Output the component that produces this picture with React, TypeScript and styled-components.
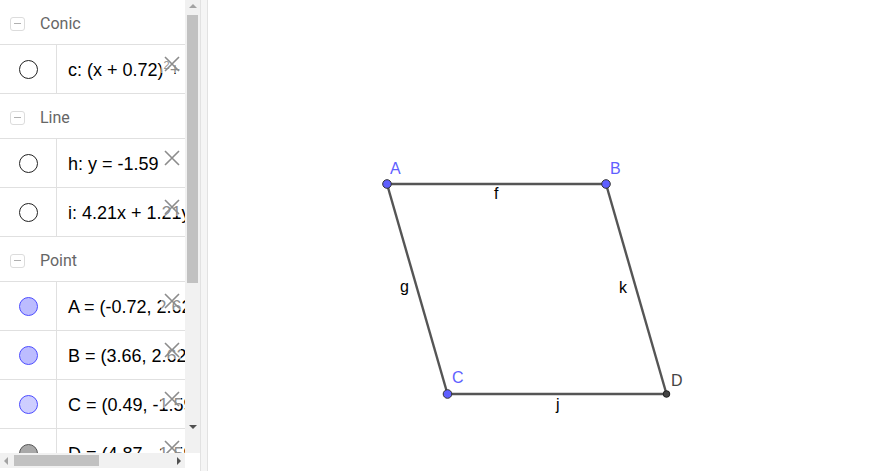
import * as React from 'react'
import styled, { createGlobalStyle, css } from 'styled-components'

const GlobalStyle = createGlobalStyle`
  html, body {
    margin: 0;
    padding: 0;
    background: #fff;
    overflow: hidden;
  }
  body {
    font-family: 'Liberation Sans', Arial, sans-serif;
  }
`

const StyledRoot = styled.div`
  display: flex;
  width: 871px;
  height: 471px;
  background: #fff;
`

const AlgebraPanel = styled.div`
  display: grid;
  grid-template-columns: 185px 15px;
  grid-template-rows: 453px 15px;
  width: 200px;
  height: 471px;
  flex-shrink: 0;
`

const ListArea = styled.div`
  overflow: hidden;
  background: #fff;
`

const GroupHeader = styled.div`
  display: flex;
  align-items: center;
  height: 45px;
  padding: 3px 0 0 10px;
  box-sizing: border-box;
  border-bottom: 1px solid #e0e0e0;
  color: #666;
  font-family: Roboto, 'Liberation Sans', sans-serif;
  font-size: 16px;
`

const CollapseBox = styled.span`
  position: relative;
  width: 15px;
  height: 14px;
  box-sizing: border-box;
  border: 1px solid #dcdcdc;
  border-radius: 3px;
  margin-right: 15px;
  &::after {
    content: '';
    position: absolute;
    left: 3px;
    right: 3px;
    top: 5px;
    height: 1.5px;
    background: #b0b0b0;
  }
`

const ItemRow = styled.div`
  display: flex;
  height: 49px;
  box-sizing: border-box;
  border-bottom: 1px solid #e0e0e0;
`

const MarkerCell = styled.div`
  display: flex;
  align-items: center;
  justify-content: center;
  width: 56px;
  flex-shrink: 0;
  border-right: 1px solid #e0e0e0;
`

type MarkerKind = 'empty' | 'free' | 'dotted' | 'grey'

const markerStyles = {
  empty: css`
    background: #fff;
    border: 1.3px solid #222;
  `,
  free: css`
    background: #bcbcff;
    border: 1.3px solid #4d4dff;
  `,
  dotted: css`
    background-color: #b8b8ff;
    background-image: radial-gradient(#e6e6ff 0.6px, transparent 0.8px);
    background-size: 2px 2px;
    border: 1.3px solid #4d4dff;
  `,
  grey: css`
    background: #a9a9a9;
    border: 1.3px solid #555;
  `
}

const Marker = styled.span<{ $kind: MarkerKind }>`
  display: block;
  width: 19px;
  height: 19px;
  box-sizing: border-box;
  border-radius: 50%;
  margin-left: 1px;
  ${({ $kind }) => markerStyles[$kind]}
`

const ItemText = styled.div`
  position: relative;
  flex: 1;
  display: flex;
  align-items: center;
  padding-left: 11px;
  padding-top: 2px;
  white-space: nowrap;
  font-size: 18px;
  color: #000;
  overflow: hidden;
  sup {
    font-size: 11px;
    margin-top: -10px;
  }
`

const DeleteButton = styled.span`
  position: absolute;
  top: 11px;
  left: 104px;
  width: 20px;
  height: 17px;
  background: rgba(255, 255, 255, 0.55);
  svg {
    display: block;
    margin-left: 3px;
  }
`

const VScroll = styled.div`
  display: flex;
  flex-direction: column;
  align-items: center;
  background: #f1f1f1;
  padding-top: 4px;
  box-sizing: border-box;
`

const HScroll = styled.div`
  display: flex;
  align-items: center;
  background: #f1f1f1;
  padding: 0 4px;
  box-sizing: border-box;
`

const Corner = styled.div`
  background: #fff;
`

const Arrow = styled.span<{ $dir: 'up' | 'down' | 'left' | 'right' }>`
  width: 0;
  height: 0;
  flex-shrink: 0;
  ${({ $dir }) => {
    switch ($dir) {
      case 'up': return css`border-left: 4px solid transparent; border-right: 4px solid transparent; border-bottom: 4px solid #a3a3a3;`
      case 'down': return css`border-left: 4px solid transparent; border-right: 4px solid transparent; border-top: 4px solid #505050;`
      case 'left': return css`border-top: 4px solid transparent; border-bottom: 4px solid transparent; border-right: 4px solid #a3a3a3;`
      default: return css`border-top: 4px solid transparent; border-bottom: 4px solid transparent; border-left: 4px solid #505050;`
    }
  }}
`

const VThumb = styled.div`
  width: 11px;
  height: 268px;
  margin-top: 7px;
  background: #c1c1c1;
`

const HThumb = styled.div`
  width: 85px;
  height: 11px;
  margin-left: 6px;
  background: #c1c1c1;
`

const Spacer = styled.div`
  flex: 1;
`

const DownSlot = styled.div`
  padding-bottom: 6px;
`

const Splitter = styled.div`
  width: 6px;
  flex-shrink: 0;
  background: #f5f5f5;
  border-left: 1px solid #e2e2e2;
  border-right: 1px solid #e2e2e2;
`

const Canvas = styled.div`
  flex: 1;
  background: #fff;
  svg {
    display: block;
  }
`

const CanvasLabel = styled.text<{ $color?: string }>`
  font-family: 'Liberation Sans', Arial, sans-serif;
  font-size: 16px;
  fill: ${({ $color }) => $color ?? '#000'};
`

interface Item {
  kind: MarkerKind
  text: React.ReactNode
}

interface Group {
  title: string
  items: Item[]
}

const groups: Group[] = [
  {
    title: 'Conic',
    items: [{ kind: 'empty', text: <>c: (x + 0.72)<sup>2</sup> + (y - 2.62)<sup>2</sup> = 23.3</> }]
  },
  {
    title: 'Line',
    items: [
      { kind: 'empty', text: 'h: y = -1.59' },
      { kind: 'empty', text: 'i: 4.21x + 1.21y = 0.1' }
    ]
  },
  {
    title: 'Point',
    items: [
      { kind: 'free', text: 'A = (-0.72, 2.62)' },
      { kind: 'free', text: 'B = (3.66, 2.62)' },
      { kind: 'dotted', text: 'C = (0.49, -1.59)' },
      { kind: 'grey', text: 'D = (4.87, -1.59)' }
    ]
  }
]

const CrossIcon = () => (
  <svg width="16" height="16" viewBox="0 0 16 16">
    <path d="M1 1 L15 15 M15 1 L1 15" stroke="#8c8c8c" strokeWidth="1.6" fill="none" />
  </svg>
)

const BLUE = '#5f5fff'

const points = {
  A: { x: 387, y: 184 },
  B: { x: 606, y: 184 },
  C: { x: 447.5, y: 394 },
  D: { x: 666.5, y: 394 }
}

const segments: Array<[keyof typeof points, keyof typeof points]> = [
  ['A', 'B'], ['A', 'C'], ['B', 'D'], ['C', 'D']
]

const Drawing = () => (
  <svg width="663" height="471" viewBox="208 0 663 471">
    {segments.map(([p, q]) => (
      <line
        key={p + q}
        x1={points[p].x}
        y1={points[p].y}
        x2={points[q].x}
        y2={points[q].y}
        stroke="#555"
        strokeWidth="2.4"
      />
    ))}
    {(['A', 'B', 'C'] as const).map((name) => (
      <circle key={name} cx={points[name].x} cy={points[name].y} r="4.3" fill={BLUE} stroke="#333" strokeWidth="1" />
    ))}
    <circle cx={points.D.x} cy={points.D.y} r="3.3" fill="#444" stroke="#222" strokeWidth="1" />

    <CanvasLabel x="390" y="174" $color={BLUE}>A</CanvasLabel>
    <CanvasLabel x="610" y="174" $color={BLUE}>B</CanvasLabel>
    <CanvasLabel x="452" y="383" $color={BLUE}>C</CanvasLabel>
    <CanvasLabel x="671" y="386" $color="#444">D</CanvasLabel>
    <CanvasLabel x="494" y="199">f</CanvasLabel>
    <CanvasLabel x="400" y="292">g</CanvasLabel>
    <CanvasLabel x="619" y="293">k</CanvasLabel>
    <CanvasLabel x="556" y="410">j</CanvasLabel>
  </svg>
)

const App = () => {
  return (
    <StyledRoot>
      <GlobalStyle />
      <AlgebraPanel>
        <ListArea>
          {groups.map((group) => (
            <React.Fragment key={group.title}>
              <GroupHeader>
                <CollapseBox />
                {group.title}
              </GroupHeader>
              {group.items.map((item, i) => (
                <ItemRow key={`${group.title}-${i}`}>
                  <MarkerCell>
                    <Marker $kind={item.kind} />
                  </MarkerCell>
                  <ItemText>
                    {item.text}
                    <DeleteButton><CrossIcon /></DeleteButton>
                  </ItemText>
                </ItemRow>
              ))}
            </React.Fragment>
          ))}
        </ListArea>
        <VScroll>
          <Arrow $dir="up" />
          <VThumb />
          <Spacer />
          <DownSlot><Arrow $dir="down" /></DownSlot>
        </VScroll>
        <HScroll>
          <Arrow $dir="left" />
          <HThumb />
          <Spacer />
          <Arrow $dir="right" />
        </HScroll>
        <Corner />
      </AlgebraPanel>
      <Splitter />
      <Canvas>
        <Drawing />
      </Canvas>
    </StyledRoot>
  )
}

export default App
